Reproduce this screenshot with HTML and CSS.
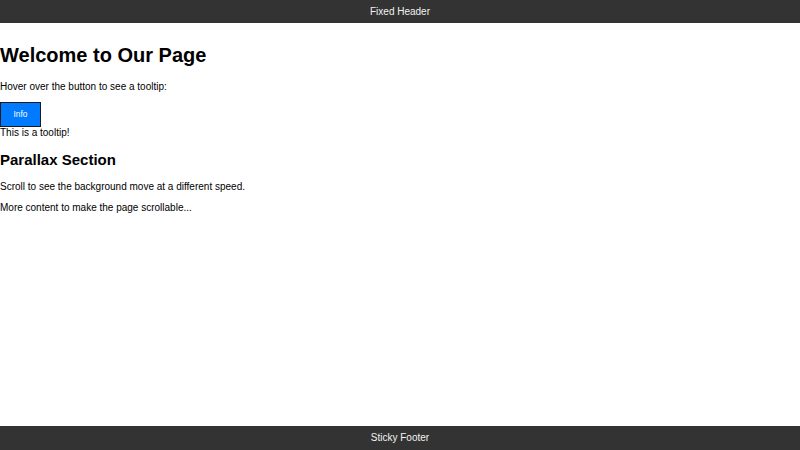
FILE: index.html
```html
<!DOCTYPE html>
<html lang="en">
<head>
<meta charset="utf-8">
<title>Fixed Header</title>
<link rel="stylesheet" href="styles.css">
</head>
<body>
<header class="site-header">Fixed Header</header>
<main class="content">
  <h1 class="title">Welcome to Our Page</h1>
  <p class="text">Hover over the button to see a tooltip:</p>
  <div class="tooltip-wrap">
    <button class="info-btn">Info</button>
    <div class="tooltip">This is a tooltip!</div>
  </div>
  <section class="parallax">
    <h2 class="subtitle">Parallax Section</h2>
    <p class="text">Scroll to see the background move at a different speed.</p>
  </section>
  <p class="text">More content to make the page scrollable...</p>
</main>
<footer class="site-footer">Sticky Footer</footer>
</body>
</html>
```
FILE: styles.css
```css
html, body {
  margin: 0;
  padding: 0;
  background: #ffffff;
}
body {
  font-family: "Liberation Sans", Arial, sans-serif;
  font-size: 10px;
  color: #000;
}
.site-header {
  position: fixed;
  top: 0;
  left: 0;
  right: 0;
  background: #333333;
  color: #f2f2f2;
  text-align: center;
  padding: 5.5px 0;
  line-height: 11.5px;
  z-index: 10;
}
.content {
  padding-top: 31px;
}
.title {
  font-size: 20px;
  margin: 13.4px 0;
  line-height: 23px;
}
.text {
  margin: 10px 0;
  line-height: 11.5px;
}
.tooltip-wrap {
  display: flex;
  flex-direction: column;
  align-items: flex-start;
}
.info-btn {
  font-family: "Liberation Sans", Arial, sans-serif;
  font-size: 8.33px;
  line-height: 9.6px;
  background: #007bff;
  color: #ffffff;
  border: 1.5px solid #1a1a1a;
  padding: 6.75px 12.5px;
  margin: 0;
}
.tooltip {
  line-height: 11.5px;
}
.subtitle {
  font-size: 15px;
  line-height: 17.2px;
  margin: 12.45px 0;
}
.site-footer {
  position: fixed;
  bottom: 0;
  left: 0;
  right: 0;
  background: #333333;
  color: #f2f2f2;
  text-align: center;
  padding: 6px 0;
  line-height: 12px;
}
```
